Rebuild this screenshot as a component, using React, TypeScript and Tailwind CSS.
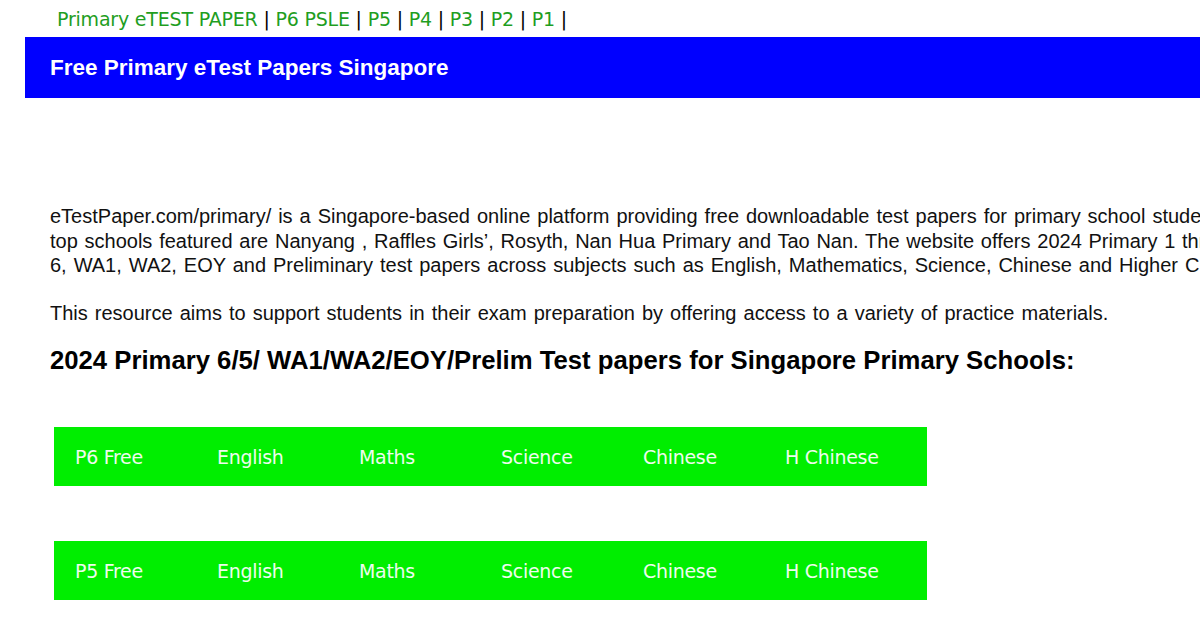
import React from 'react';

const navLinks = ['Primary eTEST PAPER', 'P6 PSLE', 'P5', 'P4', 'P3', 'P2', 'P1'];

const rows = [
  { label: 'P6 Free', subjects: ['English', 'Maths', 'Science', 'Chinese', 'H Chinese'] },
  { label: 'P5 Free', subjects: ['English', 'Maths', 'Science', 'Chinese', 'H Chinese'] },
];

const LevelRow: React.FC<{ label: string; subjects: string[] }> = ({ label, subjects }) => (
  <div className="flex h-[59px] w-[873px] items-center bg-[#00ee00] pl-[21px] pt-[2px] font-['DejaVu_Sans',sans-serif] text-[19px] text-[#eefcee]">
    {[label, ...subjects].map((item) => (
      <a key={item} href="#" className="w-[142px] shrink-0 tracking-[-0.3px]">
        {item}
      </a>
    ))}
  </div>
);

export default function App() {
  return (
    <div className="h-[630px] w-[1200px] overflow-hidden bg-white">
      <nav className="pl-[57px] pt-[7px] font-['DejaVu_Sans',sans-serif] text-[19px] leading-[24px] tracking-[-0.2px]">
        {navLinks.map((link) => (
          <span key={link}>
            <a href="#" className="text-[#1f9e1f]">{link}</a>
            <span className="text-black"> | </span>
          </span>
        ))}
      </nav>

      <header className="ml-[25px] mt-[6px] flex h-[61px] w-[1200px] items-center bg-[#0000ff] pl-[25px]">
        <h1 className="font-['Liberation_Sans',sans-serif] text-[22.5px] font-bold text-white">
          Free Primary eTest Papers Singapore
        </h1>
      </header>

      <main className="pl-[50px] pt-[106px] font-['Liberation_Sans',Arial,sans-serif] text-[#111]">
        <p className="whitespace-nowrap text-[20px] leading-[24.5px]">
          <span className="[word-spacing:1.4px]">
            eTestPaper.com/primary/ is a Singapore-based online platform providing free downloadable test papers for primary school students. Some of the
          </span>
          <br />
          <span className="[word-spacing:1.2px]">
            top schools featured are Nanyang , Raffles Girls’, Rosyth, Nan Hua Primary and Tao Nan. The website offers 2024 Primary 1 through Primary
          </span>
          <br />
          <span className="[word-spacing:1.4px]">
            6, WA1, WA2, EOY and Preliminary test papers across subjects such as English, Mathematics, Science, Chinese and Higher Chinese.
          </span>
        </p>
        <p className="mt-[23px] whitespace-nowrap text-[20px] leading-[24px] [word-spacing:1.5px]">
          This resource aims to support students in their exam preparation by offering access to a variety of practice materials.
        </p>
        <h2 className="mt-[19px] whitespace-nowrap text-[25.7px] font-bold leading-[32px] text-black">
          2024 Primary 6/5/ WA1/WA2/EOY/Prelim Test papers for Singapore Primary Schools:
        </h2>

        <div className="ml-[4px] mt-[51px] flex flex-col gap-[55px]">
          {rows.map((row) => (
            <LevelRow key={row.label} label={row.label} subjects={row.subjects} />
          ))}
        </div>
      </main>
    </div>
  );
}
